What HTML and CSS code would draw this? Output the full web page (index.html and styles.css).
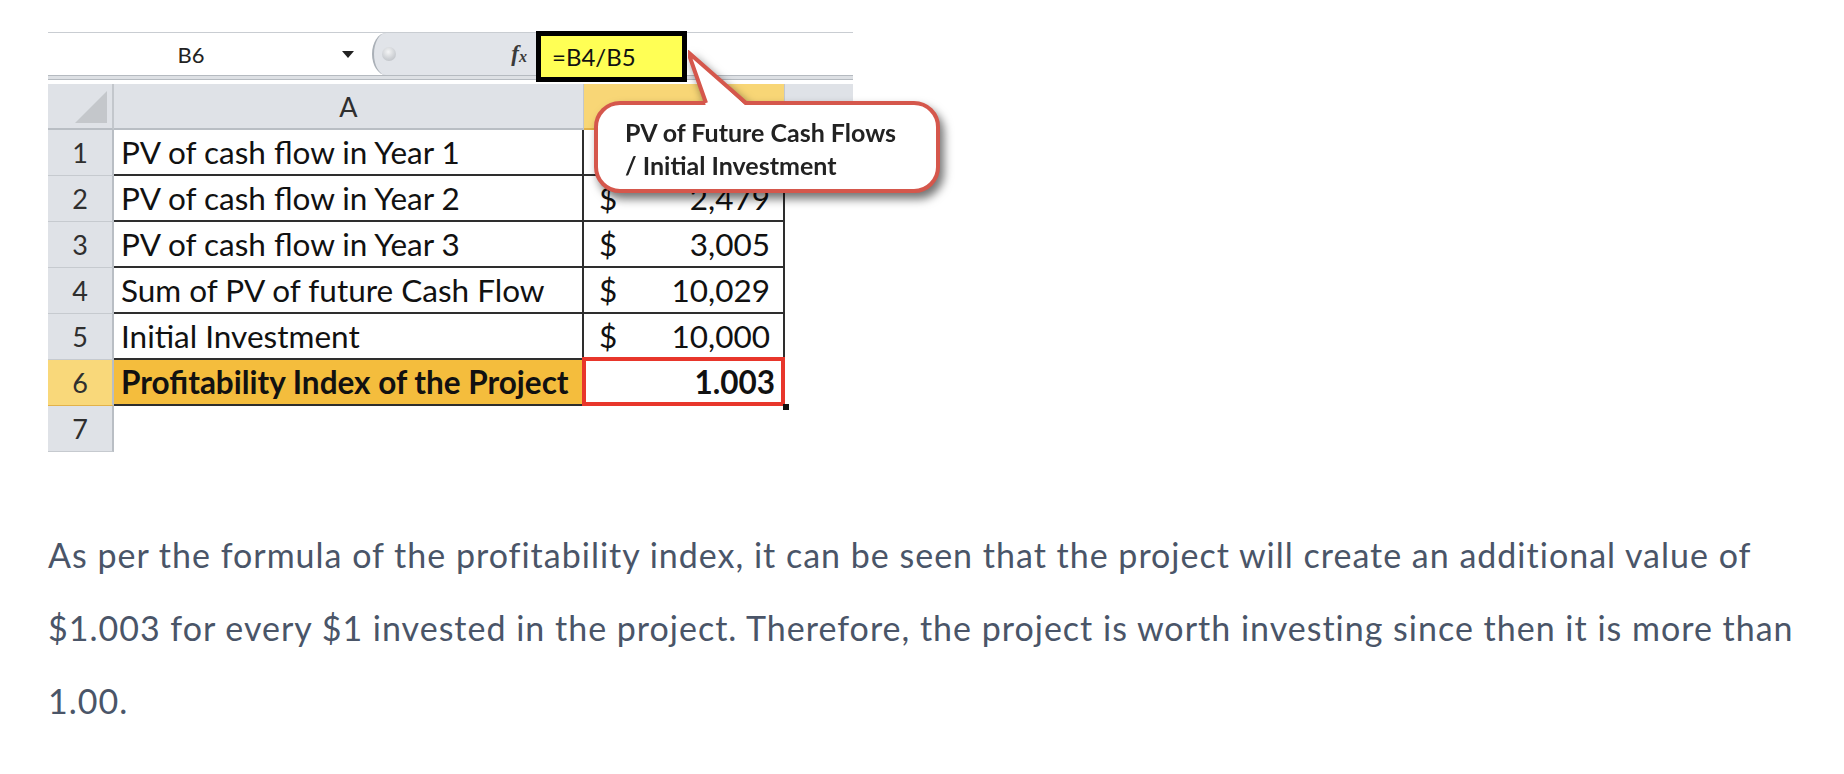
FILE: index.html
```html
<!DOCTYPE html>
<html lang="en">
<head>
<meta charset="utf-8">
<title>Profitability Index</title>
<link rel="stylesheet" href="styles.css">
</head>
<body>
<div class="page">
  <div class="sheet">
    <div class="fbar">
      <div class="namebox">
        <span class="nb-text">B6</span>
        <svg class="dd" width="12" height="7" viewBox="0 0 12 7"><path d="M0 0H12L6 7Z" fill="#222"/></svg>
      </div>
      <div class="fxarea">
        <span class="knob"></span>
        <span class="fx">f<sub>x</sub></span>
      </div>
      <div class="formula">=B4/B5</div>
      <div class="fwhite"></div>
    </div>
    <div class="fsep"></div>

    <div class="grid">
      <div class="hdr corner"><span class="tri"></span></div>
      <div class="hdr col">A</div>
      <div class="hdr col sel"></div>
      <div class="hdr fill"></div>

      <div class="rh">1</div>
      <div class="c a">PV of cash flow in Year 1</div>
      <div class="c b"></div>
      <div class="e"></div>

      <div class="rh">2</div>
      <div class="c a">PV of cash flow in Year 2</div>
      <div class="c b"><span>$</span><span>2,479</span></div>
      <div class="e"></div>

      <div class="rh">3</div>
      <div class="c a">PV of cash flow in Year 3</div>
      <div class="c b"><span>$</span><span>3,005</span></div>
      <div class="e"></div>

      <div class="rh">4</div>
      <div class="c a">Sum of PV of future Cash Flow</div>
      <div class="c b"><span>$</span><span>10,029</span></div>
      <div class="e"></div>

      <div class="rh">5</div>
      <div class="c a">Initial Investment</div>
      <div class="c b"><span>$</span><span>10,000</span></div>
      <div class="e"></div>

      <div class="rh sel">6</div>
      <div class="c a hl">Profitability Index of the Project</div>
      <div class="c b active"><span></span><span>1.003</span><i class="handle"></i></div>
      <div class="e"></div>

      <div class="rh last">7</div>
      <div class="e"></div>
      <div class="e"></div>
      <div class="e"></div>
    </div>

    <div class="callout">
      <svg class="pointer" width="70" height="58" viewBox="0 0 70 58">
        <polygon points="18,56 0,2 58,56" fill="#fff"/>
        <polyline points="18,53 0,2 58,53" fill="none" stroke="#d5574c" stroke-width="4" stroke-linejoin="miter"/>
      </svg>
      <div class="bubble">PV of Future Cash Flows<br>/ Initial Investment</div>
    </div>
  </div>

  <p class="text">As per the formula of the profitability index, it can be seen that the project will create an additional value of $1.003 for every $1 invested in the project. Therefore, the project is worth investing since then it is more than 1.00.</p>
</div>
</body>
</html>
```

FILE: styles.css
```css
html, body {
  margin: 0;
  padding: 0;
  background: #fff;
}

.page {
  padding: 32px 0 0 48px;
}

.sheet {
  position: relative;
  width: 805px;
  font-family: Lato, "Open Sans", sans-serif;
  color: #1f1f1f;
}

/* formula bar */
.fbar {
  display: flex;
  height: 42px;
  border-top: 1px solid #c9cdd2;
  border-bottom: 1px solid #b5bac0;
}

.namebox {
  width: 324px;
  flex: none;
  display: flex;
  align-items: center;
  background: #fff;
}

.nb-text {
  width: 286px;
  text-align: center;
  font-size: 22px;
  color: #222;
}

.dd {
  margin-left: 8px;
}

.fxarea {
  width: 164px;
  flex: none;
  display: flex;
  align-items: center;
  justify-content: space-between;
  box-sizing: border-box;
  background: #e1e4e9;
  border-left: 2px solid #aab0b7;
  border-radius: 14px 0 0 14px / 21px 0 0 21px;
  padding: 0 9px 0 8px;
}

.knob {
  width: 14px;
  height: 14px;
  border-radius: 50%;
  background: radial-gradient(circle at 45% 35%, #f4f5f6 0%, #cfd2d6 55%, #b6babf 100%);
}

.fx {
  font-family: "Liberation Serif", serif;
  font-style: italic;
  font-weight: bold;
  font-size: 23px;
  color: #3a3a3a;
}

.fx sub {
  font-size: 16px;
  vertical-align: -1px;
}

.formula {
  position: relative;
  z-index: 2;
  flex: none;
  align-self: flex-start;
  margin-top: -2px;
  width: 151px;
  height: 51px;
  box-sizing: border-box;
  border: 5px solid #000;
  background: #ffff55;
  font-size: 24px;
  padding-left: 11px;
  display: flex;
  align-items: center;
  color: #111;
}

.fwhite {
  flex: 1;
  background: #fff;
}

.fsep {
  height: 3px;
  background: #dde0e4;
  border-bottom: 1px solid #b5bac0;
  margin-bottom: 4px;
}

/* grid */
.grid {
  display: grid;
  grid-template-columns: 66px 470px 201px 68px;
  grid-auto-rows: 46px;
  font-size: 31.5px;
}

.hdr {
  background: #dfe2e7;
  border-bottom: 2px solid #b9bec4;
  box-sizing: border-box;
  display: flex;
  align-items: center;
  justify-content: center;
  color: #2f2f2f;
  font-size: 27px;
}

.hdr.corner {
  border-right: 2px solid #c3c7cc;
  position: relative;
  justify-content: flex-end;
  align-items: flex-end;
  padding: 0 5px 5px 0;
}

.tri {
  width: 0;
  height: 0;
  border-left: 32px solid transparent;
  border-bottom: 32px solid #c4c7cb;
}

.hdr.col {
  border-right: 1px solid #c3c7cc;
}

.hdr.sel {
  background: #f8d676;
  border-bottom-color: #e2b24a;
}

.rh {
  background: #dfe2e7;
  border-right: 2px solid #b9bec4;
  border-bottom: 1px solid #c6cacf;
  box-sizing: border-box;
  display: flex;
  align-items: center;
  justify-content: center;
  color: #2f2f2f;
  font-size: 27px;
}

.rh.sel {
  background: #f9d87a;
  border-bottom-color: #e2b24a;
}

.c {
  box-sizing: border-box;
  border-bottom: 2px solid #2e2e2e;
  border-right: 2px solid #2e2e2e;
  display: flex;
  align-items: center;
  background: #fff;
  color: #111;
}

.c.a {
  padding-left: 7px;
}

.c.hl {
  background: #f4bd3d;
  font-weight: bold;
}

.c.b {
  justify-content: space-between;
  padding: 0 13px 0 15px;
  position: relative;
}

.c.active {
  font-weight: bold;
  padding-right: 8px;
}

.c.active::after {
  content: "";
  position: absolute;
  left: -2px;
  top: -3px;
  right: -2px;
  bottom: -2px;
  border: 4px solid #e8362b;
}

.handle {
  position: absolute;
  right: -6px;
  bottom: -6px;
  width: 6px;
  height: 6px;
  background: #111;
  z-index: 1;
}

.e {
  background: #fff;
}

/* callout */
.callout {
  position: absolute;
  left: 546px;
  top: 18px;
  width: 346px;
  filter: drop-shadow(4px 6px 5px rgba(0, 0, 0, 0.55));
  z-index: 3;
}

.pointer {
  position: absolute;
  left: 94px;
  top: 0;
  z-index: 2;
}

.bubble {
  margin-top: 51px;
  height: 92px;
  box-sizing: border-box;
  border: 4px solid #d5574c;
  border-radius: 26px;
  background: #fff;
  padding: 11px 0 0 27px;
  font-size: 25px;
  font-weight: bold;
  line-height: 33px;
  color: #222;
}

/* paragraph */
.text {
  margin: 66px 0 0 0;
  width: 1775px;
  font-family: Lato, "Open Sans", sans-serif;
  font-size: 34px;
  letter-spacing: 1px;
  line-height: 73px;
  color: #4a5568;
}
```
